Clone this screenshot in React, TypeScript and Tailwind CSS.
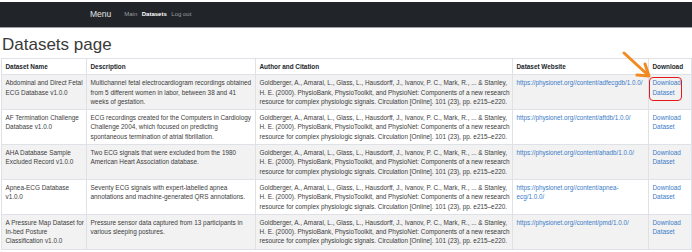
const rows = [
  {
    name: ['Abdominal and Direct Fetal', 'ECG Database v1.0.0'],
    desc: [
      'Multichannel fetal electrocardiogram recordings obtained',
      'from 5 different women in labor, between 38 and 41',
      'weeks of gestation.',
    ],
    site: ['https://physionet.org//content/adfecgdb/1.0.0/'],
  },
  {
    name: ['AF Termination Challenge', 'Database v1.0.0'],
    desc: [
      'ECG recordings created for the Computers in Cardiology',
      'Challenge 2004, which focused on predicting',
      'spontaneous termination of atrial fibrillation.',
    ],
    site: ['https://physionet.org//content/aftdb/1.0.0/'],
  },
  {
    name: ['AHA Database Sample', 'Excluded Record v1.0.0'],
    desc: ['Two ECG signals that were excluded from the 1980', 'American Heart Association database.'],
    site: ['https://physionet.org//content/ahadb/1.0.0/'],
  },
  {
    name: ['Apnea-ECG Database', 'v1.0.0'],
    desc: ['Seventy ECG signals with expert-labelled apnea', 'annotations and machine-generated QRS annotations.'],
    site: ['https://physionet.org//content/apnea-', 'ecg/1.0.0/'],
  },
  {
    name: ['A Pressure Map Dataset for', 'In-bed Posture', 'Classification v1.0.0'],
    desc: ['Pressure sensor data captured from 13 participants in', 'various sleeping postures.'],
    site: ['https://physionet.org//content/pmd/1.0.0/'],
  },
];

const citation = [
  'Goldberger, A., Amaral, L., Glass, L., Hausdorff, J., Ivanov, P. C., Mark, R., ... & Stanley,',
  'H. E. (2000). PhysioBank, PhysioToolkit, and PhysioNet: Components of a new research',
  'resource for complex physiologic signals. Circulation [Online]. 101 (23), pp. e215\u2013e220.',
];

const Lines = ({ lines }: { lines: string[] }) => (
  <>
    {lines.map((l, i) => (
      <span key={i} className="block whitespace-nowrap">
        {l}
      </span>
    ))}
  </>
);

const cell = 'border border-[#dee2e6] px-[3.5px] py-[3px] align-top';

export default function App() {
  return (
    <div className="relative w-[692px] h-[252px] overflow-hidden bg-white pt-[2px] font-['Liberation_Sans',Arial,sans-serif]">
      {/* navbar */}
      <nav className="h-[26px] bg-[#212529] border-b border-[#a0a0a0] flex items-center pl-[90px]">
        <span className="text-[8.5px] text-[#e2e2e2] mr-[13px]">Menu</span>
        <div className="flex items-center gap-[4.5px] text-[6px]">
          <span className="text-[#9a9da0]">Main</span>
          <span className="text-white font-bold">Datasets</span>
          <span className="text-[#9a9da0]">Log out</span>
        </div>
      </nav>

      {/* page */}
      <div className="px-[1px]">
        <h1 className="text-[17px] leading-[20px] text-[#3a3a3a] pl-[1px] mt-[7px] mb-[3px]">Datasets page</h1>

        <table className="table-fixed border-collapse w-[690px] text-[6.4px] leading-[9.3px] text-[#3c3c3c]">
          <colgroup>
            <col className="w-[85px]" />
            <col className="w-[169px]" />
            <col className="w-[257px]" />
            <col className="w-[136px]" />
            <col className="w-[43px]" />
          </colgroup>
          <thead>
            <tr className="text-left font-bold text-[#212529]">
              <th className={cell}>Dataset Name</th>
              <th className={cell}>Description</th>
              <th className={cell}>Author and Citation</th>
              <th className={cell}>Dataset Website</th>
              <th className={cell}>Download</th>
            </tr>
          </thead>
          <tbody>
            {rows.map((r, i) => (
              <tr key={i} className={i % 2 === 0 ? 'bg-[#f2f2f2]' : 'bg-white'}>
                <td className={cell}>
                  <Lines lines={r.name} />
                </td>
                <td className={cell}>
                  <Lines lines={r.desc} />
                </td>
                <td className={cell}>
                  <Lines lines={citation} />
                </td>
                <td className={`${cell} text-[6.3px] text-[#3a7bc8]`}>
                  <Lines lines={r.site} />
                </td>
                <td className={`${cell} text-[#3a7bc8]`}>
                  <Lines lines={['Download', 'Dataset']} />
                </td>
              </tr>
            ))}
          </tbody>
        </table>
      </div>

      {/* annotation: highlight box */}
      <div className="absolute left-[649px] top-[77px] w-[33px] h-[24px] border-[1.5px] border-[#e3191c] rounded-[4px]" />

      {/* annotation: arrow */}
      <svg className="absolute left-[618px] top-[48px]" width="40" height="34" viewBox="0 0 40 34" fill="none">
        <path d="M6 5 L30 27" stroke="#f28a22" strokeWidth="3" strokeLinecap="round" />
        <path d="M27 16 L31 28 L19 27" stroke="#f28a22" strokeWidth="3" strokeLinecap="round" strokeLinejoin="round" />
      </svg>
    </div>
  );
}
